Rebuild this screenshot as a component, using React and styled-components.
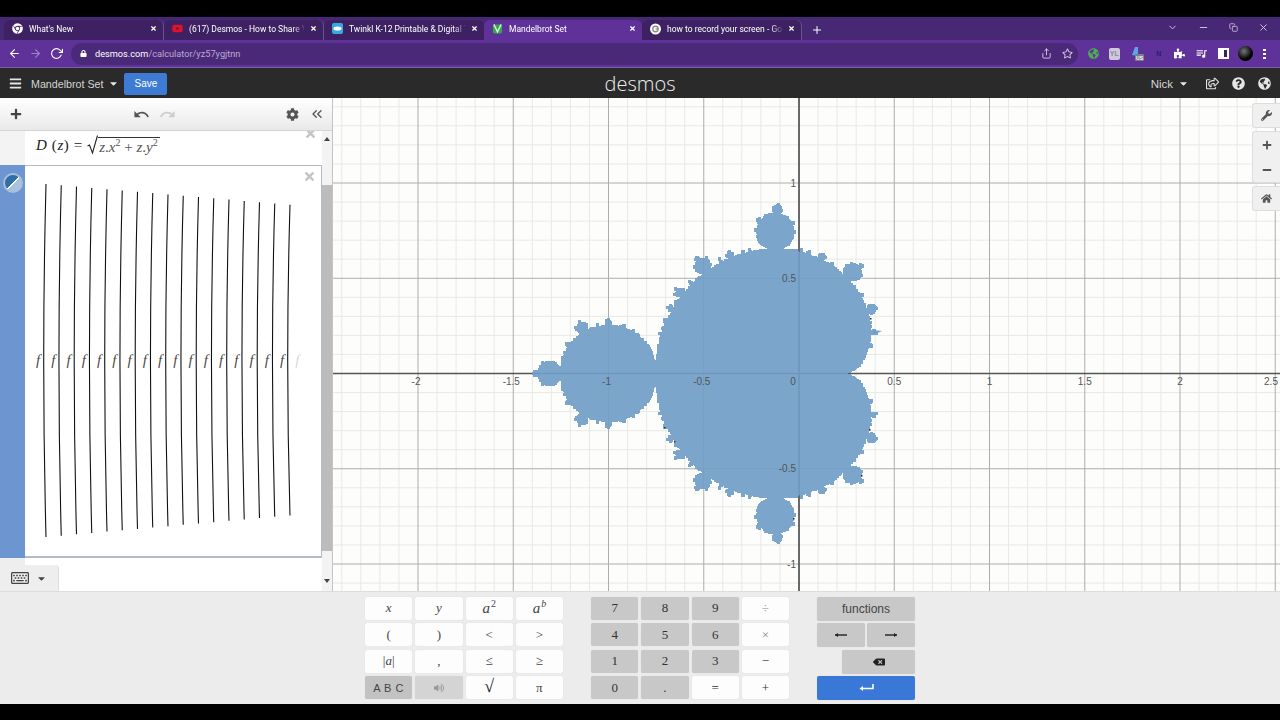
import { useMemo } from "react";
import styled, { createGlobalStyle } from "styled-components";
import {
  FaChrome, FaYoutube, FaCog, FaRegKeyboard, FaBackspace, FaWrench, FaHome,
  FaPuzzlePiece, FaQuestionCircle, FaGlobeAmericas, FaCaretDown, FaPlus, FaMinus, FaLock,
  FaRegStar, FaRegShareSquare, FaVolumeUp, FaBars, FaTimes,
} from "react-icons/fa";
import { MdUndo, MdRedo, MdQueueMusic } from "react-icons/md";
import { FiChevronsLeft, FiArrowLeft, FiArrowRight, FiRotateCw, FiShare, FiChevronDown, FiMinus, FiX, FiPlus, FiCopy } from "react-icons/fi";

const GlobalStyle = createGlobalStyle`
  html, body { margin: 0; padding: 0; background: #000; }
  * { box-sizing: border-box; }
  body { font-family: "Liberation Sans", Arial, sans-serif; }
`;

const Page = styled.div`
  width: 1280px;
  height: 720px;
  display: flex;
  flex-direction: column;
  background: #000;
  overflow: hidden;
`;

const Letterbox = styled.div`
  height: ${(p) => p.$h}px;
  flex: none;
  background: #000;
`;

/* browser chrome */
const TabStrip = styled.div`
  height: 23px;
  flex: none;
  display: flex;
  align-items: flex-end;
  padding-left: 4px;
  background: #472875;
  color: #fff;
  font-family: Roboto, sans-serif;
  font-size: 8.5px;
`;

const Tab = styled.div`
  width: ${(p) => p.$w}px;
  height: 20px;
  flex: none;
  display: flex;
  align-items: center;
  gap: 6px;
  padding: 0 6px 3px 8px;
  border-radius: 6px 6px 0 0;
  background: ${(p) => (p.$active ? "#5f329a" : "#3d2163")};
  border-right: ${(p) => (p.$sep ? "1px solid #6b5290" : "none")};
`;

const Favicon = styled.span`
  width: 11px;
  height: 11px;
  flex: none;
  display: flex;
  align-items: center;
  justify-content: center;
  font-size: 11px;
  color: ${(p) => p.$color || "#fff"};
`;

const TabTitle = styled.span`
  flex: 1;
  min-width: 0;
  white-space: nowrap;
  -webkit-mask-image: linear-gradient(to right, #000 90%, rgba(0, 0, 0, 0.15));
  mask-image: linear-gradient(to right, #000 90%, rgba(0, 0, 0, 0.15));
`;

const NewTab = styled.span`
  margin: 0 0 4px 9px;
  font-size: 12px;
  display: flex;
`;

const WindowControls = styled.div`
  margin-left: auto;
  height: 100%;
  display: flex;
  align-items: center;
  padding: 0 11px 3px 0;
  gap: 20px;
  font-size: 11px;
  color: #d8cfe6;
`;

const Toolbar = styled.div`
  height: 28px;
  flex: none;
  display: flex;
  align-items: center;
  background: #5f329a;
  border-bottom: 1px solid #7a5fa8;
  color: #fff;
`;

const NavButton = styled.span`
  width: 21px;
  display: flex;
  justify-content: center;
  font-size: 13px;
  color: ${(p) => (p.$dim ? "#9d86c4" : "#fff")};
  &:first-child { margin-left: 4px; }
`;

const Omnibox = styled.div`
  width: 1007px;
  height: 22px;
  margin-left: 4px;
  display: flex;
  align-items: center;
  padding: 0 5px 0 9px;
  border-radius: 11px;
  background: #4a2a78;
  font-family: Roboto, sans-serif;
  font-size: 9.2px;
`;

const UrlHost = styled.span`
  margin-left: 8px;
  color: #fff;
`;

const UrlPath = styled.span`
  color: #b9a9d4;
`;

const OmniIcons = styled.div`
  margin-left: auto;
  display: flex;
  align-items: center;
  gap: 10px;
  font-size: 11px;
  color: #d6cbe6;
`;

const Extensions = styled.div`
  flex: 1;
  display: flex;
  align-items: center;
  justify-content: space-between;
  padding: 0 14px 0 10px;
  font-size: 11px;
`;

const ExtensionBadge = styled.span`
  width: 11px;
  height: 12px;
  display: flex;
  align-items: center;
  justify-content: center;
  border-radius: 2px;
  font-size: 7px;
  font-weight: 700;
  color: ${(p) => p.$color || "#fff"};
  background: ${(p) => p.$bg || "transparent"};
`;

const SidePanelIcon = styled.span`
  width: 11px;
  height: 11px;
  border: 2px solid #fff;
  border-left-width: 6px;
  background: #3d2163;
`;

const Avatar = styled.span`
  width: 15px;
  height: 15px;
  border-radius: 50%;
  background: radial-gradient(circle at 40% 35%, #777, #000 60%);
`;

const MenuDots = styled.span`
  width: 3px;
  height: 11px;
  background: radial-gradient(circle, #fff 1.3px, transparent 1.5px) 0 0 / 3px 4px;
`;

/* desmos header */
const Header = styled.header`
  height: 30px;
  flex: none;
  display: grid;
  grid-template-columns: 1fr auto 1fr;
  align-items: center;
  padding-top: 1px;
  background: #2a2a2a;
  color: #d4d4d4;
`;

const HeaderLeft = styled.div`
  display: flex;
  align-items: center;
  padding-left: 9px;
`;

const GraphTitle = styled.span`
  margin-left: 9px;
  font-size: 10.7px;
`;

const Caret = styled.span`
  display: flex;
  font-size: 11px;
  margin-left: 5px;
  color: #e8e8e8;
`;

const SaveButton = styled.button`
  width: 43px;
  height: 22px;
  margin-left: 5px;
  padding: 0;
  border: none;
  border-radius: 2px;
  background: #3d7bd4;
  color: #fff;
  font: 10px "Liberation Sans", sans-serif;
`;

const Logo = styled.div`
  font-family: "Open Sans", sans-serif;
  font-weight: 300;
  font-size: 20px;
  line-height: 28px;
  color: #eee;
`;

const HeaderRight = styled.div`
  display: flex;
  align-items: center;
  justify-content: flex-end;
  padding-right: 9px;
  font-size: 11.5px;
`;

const HeaderIcon = styled.span`
  display: flex;
  margin-left: ${(p) => p.$ml || 13}px;
  font-size: 13px;
  color: #e4e4e4;
`;

/* main area */
const Main = styled.main`
  height: 493px;
  flex: none;
  display: flex;
  background: #fff;
`;

const Panel = styled.section`
  width: 333px;
  flex: none;
  display: flex;
  flex-direction: column;
  border-right: 1px solid #c4c4c4;
`;

const PanelBar = styled.div`
  height: 33px;
  flex: none;
  display: flex;
  align-items: center;
  padding: 0 10px;
  color: #555;
  background: linear-gradient(#fff, #e9e9e9);
  border-bottom: 1px solid #d5d5d5;
`;

const BarIcon = styled.span`
  display: flex;
  font-size: ${(p) => p.$size || 13}px;
  color: ${(p) => p.$color || "#555"};
  margin-left: ${(p) => p.$ml || 0}px;
`;

const PanelBody = styled.div`
  flex: 1;
  min-height: 0;
  display: flex;
`;

const ExpressionList = styled.div`
  flex: 1;
  min-width: 0;
  display: flex;
  flex-direction: column;
`;

const Expression = styled.div`
  height: ${(p) => p.$h}px;
  flex: none;
  display: flex;
  background: #fff;
`;

const Gutter = styled.div`
  width: 25px;
  flex: none;
  display: flex;
  justify-content: center;
  padding-top: 8px;
  background: ${(p) => (p.$active ? "#6d95cf" : "#f3f3f3")};
`;

const ExpressionBody = styled.div`
  flex: 1;
  position: relative;
  overflow: hidden;
  border-style: solid;
  border-color: #b2bcc4;
  border-width: ${(p) => (p.$active ? "1px 1px 2px 0" : "0")};
`;

const Formula = styled.div`
  display: flex;
  align-items: center;
  height: 100%;
  padding: 0 0 6px 11px;
  font-family: "Liberation Serif", serif;
  font-size: 15px;
  letter-spacing: 0.6px;
  color: #222;
  i { font-style: italic; }
  sup { font-size: 10px; line-height: 0; vertical-align: 6px; }
`;

const Radicand = styled.span`
  border-top: 1px solid #333;
  padding: 1px 2px 0 1px;
  margin-top: 2px;
  color: #555;
  line-height: 16px;
  letter-spacing: 0;
`;

const RemoveX = styled.span`
  position: absolute;
  right: 5px;
  top: ${(p) => p.$top}px;
  display: flex;
  font-size: 13px;
  color: #c4c4c4;
`;

const ColorDot = styled.span`
  width: 20px;
  height: 20px;
  border-radius: 50%;
  background: linear-gradient(135deg, #2f6ea8 48%, #fff 48%, #fff 54%, #a9c3de 54%);
  border: 2px solid #a7bfdc;
`;

const KeyboardRow = styled.div`
  flex: 1;
  display: flex;
  align-items: flex-end;
  background: linear-gradient(to right, #eee 25px, #fff 25px);
`;

const KeyboardTab = styled.div`
  width: 59px;
  height: 26px;
  display: flex;
  align-items: center;
  justify-content: center;
  gap: 7px;
  font-size: 18px;
  color: #444;
  background: #eee;
  border-radius: 0 4px 0 0;
  border-right: 1px solid #ddd;
`;

const Scrollbar = styled.div`
  width: 10px;
  flex: none;
  display: flex;
  flex-direction: column;
  align-items: center;
  background: #f3f3f3;
`;

const ScrollArrow = styled.span`
  height: 7px;
  margin: ${(p) => p.$m};
  width: 0;
  border-left: 3px solid transparent;
  border-right: 3px solid transparent;
  ${(p) => (p.$up ? "border-bottom: 4px solid #444;" : "border-top: 4px solid #444;")}
`;

const ScrollThumb = styled.div`
  width: 100%;
  height: 366px;
  margin-top: 44px;
  background: #bcbcbc;
`;

const Graph = styled.section`
  flex: 1;
  position: relative;
  overflow: hidden;
  background: #fdfdfb;
`;

const GraphPaper = styled.svg`
  display: block;
  font-family: "Liberation Sans", sans-serif;
`;

const GraphTools = styled.div`
  position: absolute;
  top: 5px;
  right: 0;
  width: 28px;
  display: flex;
  flex-direction: column;
  gap: 3px;
`;

const ToolGroup = styled.div`
  display: flex;
  flex-direction: column;
  background: #f0f0f0;
  border: 1px solid #ddd;
  border-right: none;
  border-radius: 3px 0 0 3px;
`;

const ToolButton = styled.span`
  height: ${(p) => p.$h || 25}px;
  display: flex;
  align-items: center;
  justify-content: center;
  font-size: ${(p) => p.$size || 10}px;
  color: #555;
`;

/* on-screen keypad */
const Keypad = styled.div`
  height: 113px;
  flex: none;
  display: flex;
  justify-content: center;
  gap: 28px;
  padding-top: 4.5px;
  background: #ececec;
  border-top: 1px solid #ddd;
`;

const KeyGrid = styled.div`
  width: 198px;
  display: grid;
  grid-template-columns: repeat(4, 1fr);
  grid-auto-rows: 23px;
  gap: 3.6px 3px;
`;

const SideKeys = styled.div`
  width: 98px;
  display: flex;
  flex-direction: column;
  gap: 2.6px;
`;

const SideRow = styled.div`
  height: 24px;
  display: flex;
  justify-content: flex-end;
  gap: 2px;
`;

const toneColors = {
  white: "#fdfdfd",
  gray: "#c8c8c8",
  mute: "#d4d4d4",
  dark: "#c2c2c2",
  blue: "#3a78d8",
};

const Key = styled.button`
  flex: ${(p) => (p.$w ? `0 0 ${p.$w}px` : 1)};
  min-width: 0;
  padding: 0 0 ${(p) => p.$lift || 0}px;
  display: flex;
  align-items: center;
  justify-content: center;
  border: none;
  border-radius: 2px;
  background: ${(p) => toneColors[p.$tone || "white"]};
  box-shadow: 0 0 1px rgba(0, 0, 0, 0.12);
  color: ${(p) => p.$color || "#444"};
  font-family: ${(p) => (p.$sans ? '"Liberation Sans", sans-serif' : '"Liberation Serif", serif')};
  font-size: ${(p) => p.$size || 12}px;
  letter-spacing: ${(p) => (p.$spaced ? "0.5px" : "0")};
  i { font-style: italic; }
  sup { font-size: 10px; line-height: 0; vertical-align: 6px; margin-left: 1px; }
`;

const PowerLabel = styled.span`
  font-size: 15px;
`;

function TwinklIcon() {
  return (
    <svg width="11" height="11" viewBox="0 0 11 11">
      <rect width="11" height="11" rx="2" fill="#38a9e0" />
      <ellipse cx="5.5" cy="5.5" rx="4" ry="2" fill="#fff" />
    </svg>
  );
}

function DesmosFavicon() {
  return (
    <svg width="12" height="12" viewBox="0 0 12 12">
      <rect x="1" y="1" width="10" height="10" rx="2" fill="#35a84a" />
      <path d="M2 1l4 8 4-8" fill="none" stroke="#cfeedd" strokeWidth="1.6" />
    </svg>
  );
}

function GoogleBadge() {
  return (
    <svg width="12" height="12" viewBox="0 0 12 12">
      <circle cx="6" cy="6" r="6" fill="#fff" />
      <circle cx="6" cy="6" r="3" fill="none" stroke="#8a8a8a" strokeWidth="1.4" />
      <path d="M6 6h3.2" stroke="#8a8a8a" strokeWidth="1.4" />
    </svg>
  );
}

function UsExtensionIcon() {
  return (
    <svg width="14" height="15" viewBox="0 0 14 15">
      <path d="M2 9L5 1h3v9z" fill="#5ea2e8" />
      <rect x="5" y="8" width="9" height="7" rx="1" fill="#7a7f8a" />
      <text x="9.5" y="13.5" fontSize="5" fontWeight="700" fill="#fff" textAnchor="middle">US</text>
    </svg>
  );
}

const tabs = [
  { title: "What's New", icon: <FaChrome />, w: 160, sep: true },
  { title: "(617) Desmos - How to Share You", icon: <FaYoutube />, color: "#e0122a", w: 160, sep: true },
  { title: "Twinkl K-12 Printable & Digital Te", icon: <TwinklIcon />, w: 160 },
  { title: "Mandelbrot Set", icon: <DesmosFavicon />, w: 158, active: true },
  { title: "how to record your screen - Goo", icon: <GoogleBadge />, w: 160, sep: true },
];

const S = 190.5;
const OX = 466;
const OY = 275.5;
const W = 947;
const H = 493;
const MAX_ITER = 42;

// escape-time test on a 1px grid, then an opening pass to drop the thin filaments
function mandelbrotPath() {
  const x0 = 190;
  const y0 = 100;
  const cols = 370;
  const rows = 350;
  const R = 1;
  const inside = new Uint8Array(cols * rows);
  for (let r = 0; r < rows; r++) {
    for (let c = 0; c < cols; c++) {
      const cx = (x0 + c + 0.5 - OX) / S;
      const cy = (OY - y0 - r - 0.5) / S;
      let x = 0;
      let y = 0;
      let n = 0;
      while (n < MAX_ITER && x * x + y * y < 4) {
        const t = x * x - y * y + cx;
        y = 2 * x * y + cy;
        x = t;
        n++;
      }
      if (n === MAX_ITER) inside[r * cols + c] = 1;
    }
  }
  const sweep = (src, want) => {
    const out = new Uint8Array(cols * rows);
    for (let r = R; r < rows - R; r++) {
      for (let c = R; c < cols - R; c++) {
        let hit = want === 0;
        for (let dr = -R; dr <= R; dr++) {
          for (let dc = -R; dc <= R; dc++) {
            const v = src[(r + dr) * cols + c + dc];
            if (want === 0 && !v) hit = false;
            if (want === 1 && v) hit = true;
          }
        }
        out[r * cols + c] = hit ? 1 : 0;
      }
    }
    return out;
  };
  const opened = sweep(sweep(inside, 0), 1);
  let d = "";
  for (let r = 0; r < rows; r++) {
    let start = -1;
    for (let c = 0; c <= cols; c++) {
      const on = c < cols && opened[r * cols + c];
      if (on && start < 0) start = c;
      if (!on && start >= 0) {
        d += `M${x0 + start} ${y0 + r}h${c - start}v1h${start - c}z`;
        start = -1;
      }
    }
  }
  return d;
}

function GraphGrid() {
  const fractal = useMemo(mandelbrotPath, []);
  const minor = [];
  const major = [];
  for (let i = -30; i <= 30; i++) {
    const vx = OX + (i * S) / 10;
    const hy = OY + (i * S) / 10;
    const list = i % 5 === 0 ? major : minor;
    if (vx >= 0 && vx <= W) list.push(<line key={`v${i}`} x1={vx} x2={vx} y1={0} y2={H} />);
    if (hy >= 0 && hy <= H) list.push(<line key={`h${i}`} x1={0} x2={W} y1={hy} y2={hy} />);
  }
  const xLabels = [-2, -1.5, -1, -0.5, 0.5, 1, 1.5, 2, 2.5];
  const yLabels = [1, 0.5, -0.5, -1];
  const specks = [[331, 329], [341, 343], [536, 331], [528, 377], [460, 420], [537, 220]];
  return (
    <GraphPaper width={W} height={H} viewBox={`0 0 ${W} ${H}`}>
      <g stroke="#e9e9e6" strokeWidth="1">{minor}</g>
      <g stroke="#adadad" strokeWidth="1">{major}</g>
      <line x1={OX} x2={OX} y1={0} y2={H} stroke="#3c3c3c" strokeWidth="1.4" />
      <line x1={0} x2={W} y1={OY} y2={OY} stroke="#555" strokeWidth="1.4" />
      <path d={fractal} fill="#709dc6" fillOpacity="0.92" />
      <path d="M540 232L549 233L540 237z" fill="#709dc6" fillOpacity="0.92" />
      {specks.map(([x, y]) => (
        <rect key={x} x={x} y={y} width="1.5" height="1.5" fill="#333" />
      ))}
      <g fontSize="10" fill="#555" textAnchor="middle">
        {xLabels.map((v) => (
          <text key={v} x={Math.min(OX + v * S - (v < 0 ? 2 : 0), W - 9)} y={OY + 11}>{v}</text>
        ))}
        <text x={OX - 6} y={OY + 11}>0</text>
      </g>
      <g fontSize="10" fill="#555" textAnchor="end">
        {yLabels.map((v) => (
          <text key={v} x={OX - 3} y={OY - v * S + 3.5}>{v}</text>
        ))}
      </g>
    </GraphPaper>
  );
}

function BracketLines() {
  const lines = Array.from({ length: 17 }, (_, i) => {
    const x = 21 + i * 15.25;
    const top = 18 + i * 1.3;
    const bottom = 371 - i * 1.35;
    return <path key={i} d={`M${x} ${top}Q${x - 4.6} ${(top + bottom) / 2} ${x} ${bottom}`} />;
  });
  const glyphs = Array.from({ length: 18 }, (_, i) => (
    <text key={i} x={11 + i * 15.25} y={199} fillOpacity={i === 17 ? 0.2 : 0.85}>f</text>
  ));
  return (
    <svg width="296" height="390" style={{ display: "block" }}>
      <g fill="none" stroke="#111" strokeWidth="1.1">{lines}</g>
      <g fontFamily='"Liberation Serif", serif' fontStyle="italic" fontSize="15" fill="#222">{glyphs}</g>
    </svg>
  );
}

function Radical() {
  return (
    <svg width="11" height="20" viewBox="0 0 11 20">
      <path d="M0.5 11l2-1 3 8L10.5 0.5" fill="none" stroke="#222" strokeWidth="1.1" />
    </svg>
  );
}

const mainKeys = [
  [<i>x</i>, <i>y</i>, <PowerLabel><i>a</i><sup>2</sup></PowerLabel>, <PowerLabel><i>a</i><sup><i>b</i></sup></PowerLabel>],
  ["(", ")", "<", ">"],
  [<>|<i>a</i>|</>, ",", "≤", "≥"],
];

const numberKeys = [
  ["7", "8", "9", "÷"],
  ["4", "5", "6", "×"],
  ["1", "2", "3", "−"],
  ["0", ".", "=", "+"],
];

function EnterIcon() {
  return (
    <svg width="15" height="8" viewBox="0 0 15 8">
      <path d="M14 0v4.5H3" fill="none" stroke="#fff" strokeWidth="1.6" />
      <path d="M4 2L0.5 4.5 4 7z" fill="#fff" />
    </svg>
  );
}

function ArrowKey({ dir }) {
  return (
    <svg width="12" height="6" viewBox="0 0 12 6">
      <path d="M0 3h12" stroke="#222" strokeWidth="1.4" />
      <path d={dir === "left" ? "M0 3l3-2v4z" : "M12 3l-3-2v4z"} fill="#222" />
    </svg>
  );
}

export default function App() {
  return (
    <Page>
      <GlobalStyle />
      <Letterbox $h={17} />
      <TabStrip>
        {tabs.map((t) => (
          <Tab key={t.title} $w={t.w} $active={t.active} $sep={t.sep}>
            <Favicon $color={t.color}>{t.icon}</Favicon>
            <TabTitle>{t.title}</TabTitle>
            <FaTimes size={7} />
          </Tab>
        ))}
        <NewTab><FiPlus /></NewTab>
        <WindowControls>
          <FiChevronDown />
          <FiMinus />
          <FiCopy size={9} />
          <FiX />
        </WindowControls>
      </TabStrip>
      <Toolbar>
        <NavButton><FiArrowLeft /></NavButton>
        <NavButton $dim><FiArrowRight /></NavButton>
        <NavButton><FiRotateCw /></NavButton>
        <Omnibox>
          <FaLock size={7} />
          <UrlHost>desmos.com</UrlHost>
          <UrlPath>/calculator/yz57ygjtnn</UrlPath>
          <OmniIcons>
            <FiShare />
            <FaRegStar />
          </OmniIcons>
        </Omnibox>
        <Extensions>
          <FaGlobeAmericas color="#4caf50" />
          <ExtensionBadge $bg="#cfc8dc" $color="#8d86a0">YL</ExtensionBadge>
          <UsExtensionIcon />
          <ExtensionBadge $color="#2a1d6e">N</ExtensionBadge>
          <FaPuzzlePiece />
          <MdQueueMusic size={13} />
          <SidePanelIcon />
          <Avatar />
          <MenuDots />
        </Extensions>
      </Toolbar>
      <Header>
        <HeaderLeft>
          <FaBars size={13} color="#e4e4e4" />
          <GraphTitle>Mandelbrot Set</GraphTitle>
          <Caret><FaCaretDown /></Caret>
          <SaveButton>Save</SaveButton>
        </HeaderLeft>
        <Logo>desmos</Logo>
        <HeaderRight>
          Nick
          <Caret><FaCaretDown /></Caret>
          <HeaderIcon $ml={17}><FaRegShareSquare /></HeaderIcon>
          <HeaderIcon><FaQuestionCircle /></HeaderIcon>
          <HeaderIcon><FaGlobeAmericas /></HeaderIcon>
        </HeaderRight>
      </Header>
      <Main>
        <Panel>
          <PanelBar>
            <BarIcon $size={12} $color="#444"><FaPlus /></BarIcon>
            <BarIcon $ml={111} $size={17}><MdUndo /></BarIcon>
            <BarIcon $ml={9} $size={17} $color="#ccc"><MdRedo /></BarIcon>
            <BarIcon $ml={110}><FaCog /></BarIcon>
            <BarIcon $ml={10} $size={16}><FiChevronsLeft /></BarIcon>
          </PanelBar>
          <PanelBody>
            <ExpressionList>
              <Expression $h={34}>
                <Gutter />
                <ExpressionBody>
                  <Formula>
                    <i>D</i>&nbsp;(<i>z</i>)&nbsp;=&nbsp;<Radical />
                    <Radicand><i>z</i>.<i>x</i><sup>2</sup> + <i>z</i>.<i>y</i><sup>2</sup></Radicand>
                  </Formula>
                  <RemoveX $top={-4}><FaTimes /></RemoveX>
                </ExpressionBody>
              </Expression>
              <Expression $h={393}>
                <Gutter $active><ColorDot /></Gutter>
                <ExpressionBody $active>
                  <BracketLines />
                  <RemoveX $top={4}><FaTimes /></RemoveX>
                </ExpressionBody>
              </Expression>
              <KeyboardRow>
                <KeyboardTab>
                  <FaRegKeyboard />
                  <FaCaretDown size={11} />
                </KeyboardTab>
              </KeyboardRow>
            </ExpressionList>
            <Scrollbar>
              <ScrollArrow $up $m="3px 0 0" />
              <ScrollThumb />
              <ScrollArrow $m="28px 0 0" />
            </Scrollbar>
          </PanelBody>
        </Panel>
        <Graph>
          <GraphGrid />
          <GraphTools>
            <ToolGroup><ToolButton $h={23} $size={11}><FaWrench /></ToolButton></ToolGroup>
            <ToolGroup>
              <ToolButton><FaPlus /></ToolButton>
              <ToolButton><FaMinus /></ToolButton>
            </ToolGroup>
            <ToolGroup><ToolButton $h={23} $size={11}><FaHome /></ToolButton></ToolGroup>
          </GraphTools>
        </Graph>
      </Main>
      <Keypad>
        <KeyGrid>
          {mainKeys.flat().map((k, i) => (
            <Key key={i} $size={13}>{k}</Key>
          ))}
          <Key $tone="dark" $sans $spaced $size={11}>A B C</Key>
          <Key $tone="mute" $color="#999" $size={10}><FaVolumeUp /></Key>
          <Key $size={18} $color="#222" $lift={2}>√</Key>
          <Key $size={13}>π</Key>
        </KeyGrid>
        <KeyGrid>
          {numberKeys.flat().map((k) => {
            const isDigit = /[0-9.]/.test(k);
            return (
              <Key key={k} $tone={isDigit ? "gray" : "white"} $size={13} $color={k === "×" || k === "÷" ? "#888" : "#333"}>
                {k}
              </Key>
            );
          })}
        </KeyGrid>
        <SideKeys>
          <SideRow><Key $tone="gray" $sans $size={12}>functions</Key></SideRow>
          <SideRow>
            <Key $tone="gray"><ArrowKey dir="left" /></Key>
            <Key $tone="gray"><ArrowKey dir="right" /></Key>
          </SideRow>
          <SideRow><Key $tone="gray" $w={73} $color="#222"><FaBackspace /></Key></SideRow>
          <SideRow><Key $tone="blue"><EnterIcon /></Key></SideRow>
        </SideKeys>
      </Keypad>
      <Letterbox $h={16} />
    </Page>
  );
}
